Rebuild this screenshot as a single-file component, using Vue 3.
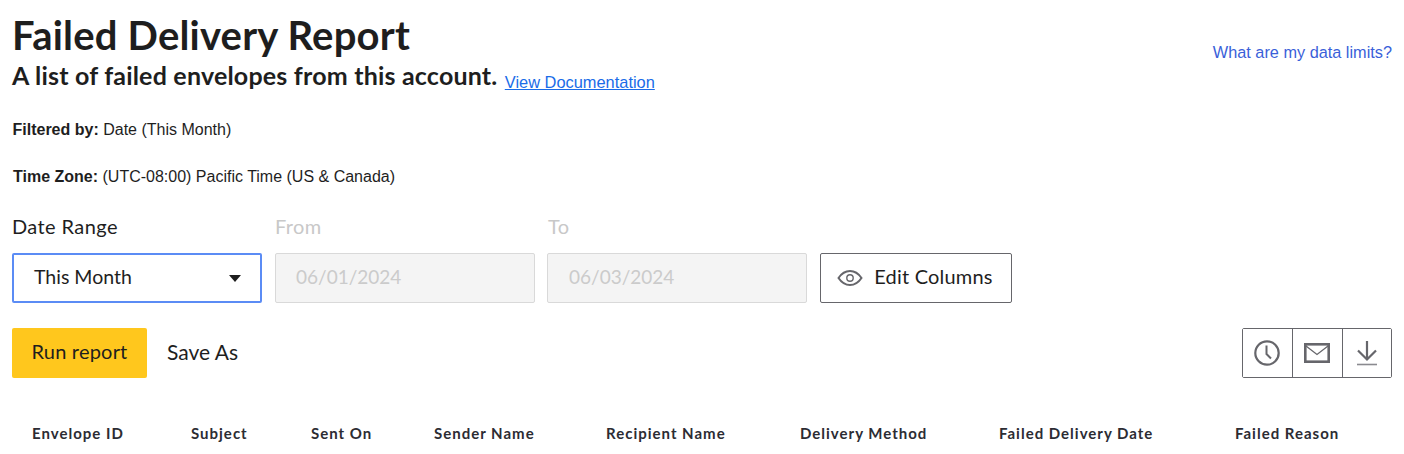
<script setup>
const columns = [
  { label: 'Envelope ID', width: 159 },
  { label: 'Subject', width: 120 },
  { label: 'Sent On', width: 123 },
  { label: 'Sender Name', width: 172 },
  { label: 'Recipient Name', width: 194 },
  { label: 'Delivery Method', width: 199 },
  { label: 'Failed Delivery Date', width: 236 },
  { label: 'Failed Reason', width: 177 },
]
</script>

<template>
  <main class="page">
    <header class="head">
      <div>
        <h1 class="title">Failed Delivery Report</h1>
        <p class="subtitle">A list of failed envelopes from this account. <a class="doc" href="#">View Documentation</a></p>
      </div>
      <a class="limits" href="#">What are my data limits?</a>
    </header>

    <p class="meta first"><b>Filtered by:</b> Date (This Month)</p>
    <p class="meta second"><b>Time Zone:</b> (UTC-08:00) Pacific Time (US &amp; Canada)</p>

    <section class="filters">
      <div class="field range">
        <label>Date Range</label>
        <div class="select"><span>This Month</span><i class="caret"></i></div>
      </div>
      <div class="field date">
        <label class="off">From</label>
        <div class="input">06/01/2024</div>
      </div>
      <div class="field date">
        <label class="off">To</label>
        <div class="input">06/03/2024</div>
      </div>
      <button class="edit" type="button">
        <svg width="26" height="18" viewBox="0 0 26 18" fill="none" stroke="#66666b" stroke-width="2">
          <path d="M1.500 9C5 3.800 8.800 2 13 2S21 3.800 24.500 9C21 14.200 17.200 16 13 16S5 14.200 1.500 9Z" />
          <circle cx="13" cy="9" r="3.200" stroke-width="1.400" />
        </svg>
        <span class="edit-label">Edit Columns</span>
      </button>
    </section>

    <section class="actions">
      <button class="run" type="button">Run report</button>
      <button class="save" type="button">Save As</button>
      <div class="tools">
        <button type="button" aria-label="Schedule">
          <svg width="26" height="26" viewBox="0 0 26 26" fill="none" stroke="#66666b" stroke-width="2.200">
            <circle cx="13" cy="13" r="11.700" />
            <path d="M12.500 5.500v8.500l4.500 4.500" stroke-width="2" />
          </svg>
        </button>
        <button type="button" aria-label="Email">
          <svg width="26" height="20" viewBox="0 0 26 20" fill="none" stroke="#66666b">
            <rect x="1.300" y="1.300" width="23.400" height="17.400" stroke-width="2.600" />
            <path d="M2 3l11 8.500L24 3" stroke-width="1.300" />
          </svg>
        </button>
        <button type="button" aria-label="Download">
          <svg width="22" height="26" viewBox="0 0 22 26" fill="none" stroke="#66666b" stroke-width="2.200">
            <path d="M11 1v18M2 10.500l9 9 9-9" />
            <path d="M1 24.500h20" stroke="#8a8a8f" stroke-width="1.600" />
          </svg>
        </button>
      </div>
    </section>

    <div class="table-head">
      <div v-for="c in columns" :key="c.label" class="th" :style="{ width: c.width + 'px' }">{{ c.label }}</div>
    </div>
  </main>
</template>

<style>
html, body { margin: 0; background: #fff; overflow: hidden; }
</style>

<style scoped>
.page {
  width: 1404px;
  height: 454px;
  box-sizing: border-box;
  padding: 0 12px;
  color: #1e1e1e;
  font-family: "Liberation Sans", Arial, sans-serif;
  overflow: hidden;
}
.head { display: flex; justify-content: space-between; align-items: flex-start; }
.title {
  margin: 0;
  padding-top: 10px;
  font: 700 40px/50px Lato, sans-serif;
  letter-spacing: 0.2px;
}
.subtitle {
  margin: 0;
  font: 700 25px/31px Lato, sans-serif;
  letter-spacing: 0.2px;
}
.doc {
  margin-left: 1px;
  font: 400 16.400px "Liberation Sans", sans-serif;
  letter-spacing: 0;
  color: #1a6ce8;
  vertical-align: -3px;
}
.limits {
  margin-top: 43px;
  font-size: 16.300px;
  line-height: 19px;
  color: #3a5fd9;
  text-decoration: none;
}
.meta { margin: 0; font-size: 16px; line-height: 18px; }
.first { margin-top: 29px; margin-left: 0.500px; }
.second { margin-top: 29px; margin-left: 1px; }
.filters { display: flex; align-items: flex-end; margin-top: 28px; }
.field { display: flex; flex-direction: column; }
.field label { font: 400 20px/24px Lato, sans-serif; letter-spacing: 0.400px; margin-bottom: 15px; }
.field label.off { color: #c8c8c8; }
.range { width: 250px; margin-right: 13px; }
.date { width: 260px; margin-right: 12px; }
.date + .date label { padding-left: 1px; }
.date + .date .input { padding-left: 21px; }
.select {
  height: 50px;
  box-sizing: border-box;
  border: 2px solid #5b8cf5;
  border-radius: 2px;
  padding: 0 19px 0 20px;
  display: flex;
  align-items: center;
  justify-content: space-between;
  font: 400 19.500px Lato, sans-serif;
}
.select span { padding-bottom: 4px; }
.caret { width: 0; height: 0; border: 6.500px solid transparent; border-top: 7px solid #1e1e1e; border-bottom: 0; }
.input {
  height: 50px;
  box-sizing: border-box;
  border: 1px solid #d9d9d9;
  border-radius: 2px;
  background: #f4f4f4;
  padding-left: 20px;
  padding-bottom: 4px;
  display: flex;
  align-items: center;
  color: #cbcbcb;
  font: 400 19px Lato, sans-serif;
}
button { font-family: Lato, sans-serif; color: #1e1e1e; cursor: pointer; }
.edit {
  width: 192px;
  height: 50px;
  margin-left: 1px;
  box-sizing: border-box;
  border: 1px solid #66666b;
  border-radius: 2px;
  background: #fff;
  font-size: 20px;
  letter-spacing: 0.200px;
  display: flex;
  align-items: center;
  justify-content: center;
  gap: 11px;
  padding: 0 2px 0 0;
}
.edit-label { padding-bottom: 4px; }
.actions { display: flex; align-items: center; margin-top: 25px; }
.run {
  width: 135px;
  height: 50px;
  border: 0;
  border-radius: 2px;
  background: #ffc71d;
  font-size: 20px;
  letter-spacing: 0.200px;
  padding: 0 0 4px 0;
}
.save { border: 0; background: none; font-size: 21px; padding: 0 0 4px 0; margin-left: 20px; }
.tools {
  margin-left: auto;
  display: flex;
  width: 150px;
  height: 50px;
  box-sizing: border-box;
  border: 1px solid #66666b;
  border-radius: 2px;
}
.tools button {
  flex: none;
  width: 50px;
  border: 0;
  border-right: 1px solid #66666b;
  background: #fff;
  padding: 0 2px 0 0;
  display: flex;
  align-items: center;
  justify-content: center;
}
.tools button:last-child { width: 48px; border-right: 0; padding: 0; }
.table-head { display: flex; margin-top: 45px; }
.th {
  flex: none;
  box-sizing: border-box;
  padding-left: 20px;
  font: 700 15px/20px Lato, sans-serif;
  letter-spacing: 1px;
  color: #2c2c33;
  white-space: nowrap;
}
</style>
